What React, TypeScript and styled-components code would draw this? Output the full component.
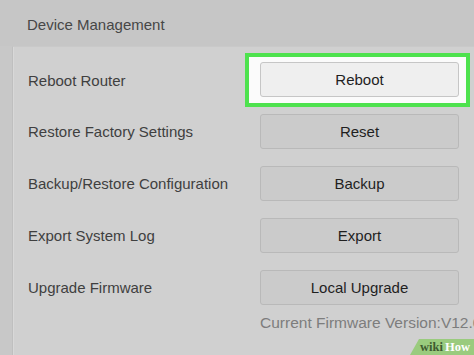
import styled, { createGlobalStyle } from "styled-components";

const GlobalStyle = createGlobalStyle`
  html, body {
    margin: 0;
    padding: 0;
  }
  body {
    width: 474px;
    height: 355px;
    overflow: hidden;
    background: #c8c8c8;
    font-family: "Liberation Sans", Arial, sans-serif;
  }
`;

const Screen = styled.div`
  position: relative;
  width: 474px;
  height: 355px;
  overflow: hidden;
  background: #c8c8c8;
  display: flex;
  flex-direction: column;
`;

const Header = styled.div`
  height: 46px;
  flex-shrink: 0;
  padding: 3px 0 0 27px;
  display: flex;
  align-items: center;
  font-size: 15px;
  color: #474747;
  background: #c6c6c6;
  box-sizing: border-box;
`;

const Panel = styled.div`
  flex: 1;
  margin-left: 12px;
  padding: 6px 0 0 15px;
  background: #d0d0d0;
  border-left: 1px solid #bfbfbf;
  border-top: 1px solid #c9c9c9;
  box-shadow: inset 1px 0 0 #d8d8d8;
`;

const Row = styled.div`
  height: 52px;
  display: grid;
  grid-template-columns: 232px 199px;
  align-items: center;
`;

const Label = styled.div`
  font-size: 15px;
  color: #3f3f3f;
`;

const Highlight = styled.div`
  border: 4px solid #4ee24e;
  background: #fbfbfb;
  padding: 5px 7px 6px 11px;
  margin: 0 -11px 0 -15px;
`;

const Button = styled.div<{ $active?: boolean }>`
  height: 35px;
  box-sizing: border-box;
  display: flex;
  align-items: center;
  justify-content: center;
  font-size: 15px;
  color: #1f1f1f;
  border-radius: 3px;
  border: 1px solid ${(p) => (p.$active ? "#c6c6c6" : "#b9b9b9")};
  background: ${(p) => (p.$active ? "#efefef" : "#cbcbcb")};
`;

const Version = styled.div`
  margin-left: 232px;
  margin-top: 1px;
  font-size: 15.5px;
  color: #7d7d7d;
  white-space: nowrap;
`;

const Badge = styled.div`
  position: absolute;
  right: 0;
  bottom: 0;
  width: 64px;
  height: 16px;
  background: #9acb7e;
  clip-path: polygon(9px 0, 100% 0, 100% 100%, 0 100%);
  display: flex;
  align-items: center;
  justify-content: flex-end;
  padding-right: 4px;
  box-sizing: border-box;
  font-family: "Liberation Serif", "DejaVu Serif", serif;
  font-weight: bold;
  font-size: 12.5px;
  color: #3e5a30;
`;

const How = styled.span`
  color: #ffffff;
  margin-left: 2px;
`;

const rows = [
  { label: "Restore Factory Settings", action: "Reset" },
  { label: "Backup/Restore Configuration", action: "Backup" },
  { label: "Export System Log", action: "Export" },
  { label: "Upgrade Firmware", action: "Local Upgrade" },
];

export default function App() {
  return (
    <>
      <GlobalStyle />
      <Screen>
        <Header>Device Management</Header>
        <Panel>
          <Row>
            <Label>Reboot Router</Label>
            <Highlight>
              <Button $active>Reboot</Button>
            </Highlight>
          </Row>
          {rows.map((r) => (
            <Row key={r.label}>
              <Label>{r.label}</Label>
              <Button>{r.action}</Button>
            </Row>
          ))}
          <Version>Current Firmware Version:V12.0.2</Version>
        </Panel>
        <Badge>
          wiki<How>How</How>
        </Badge>
      </Screen>
    </>
  );
}
